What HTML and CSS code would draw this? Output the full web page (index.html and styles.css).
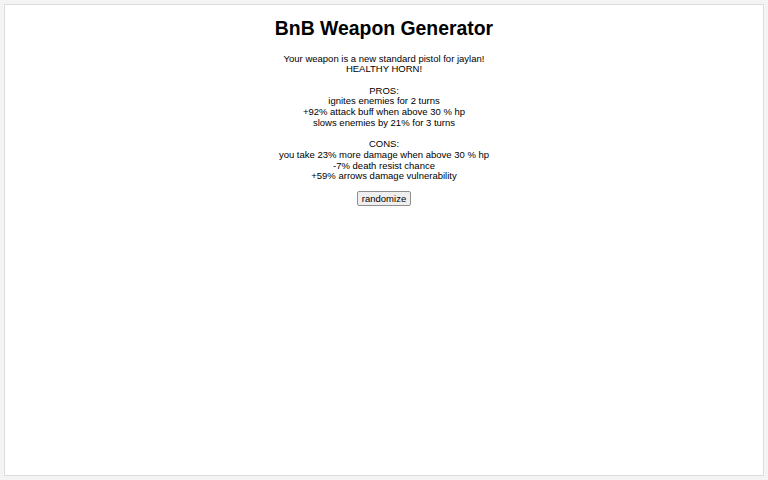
FILE: index.html
```html
<!DOCTYPE html>
<html lang="en">
<head>
    <meta charset="UTF-8">
    <meta name="viewport" content="width=device-width, initial-scale=1.0">
    <title>BnB Weapon Generator</title>
    <link rel="stylesheet" href="styles.css">
</head>
<body>
    <div class="page">
        <h1 class="title">BnB Weapon Generator</h1>

        <!-- generated weapon -->
        <div class="weapon" id="weapon">
            <p>Your weapon is a new standard pistol for jaylan!<br>HEALTHY HORN!</p>
            <p>PROS:<br>ignites enemies for 2 turns<br>+92% attack buff when above 30 % hp<br>slows enemies by 21% for 3 turns</p>
            <p>CONS:<br>you take 23% more damage when above 30 % hp<br>-7% death resist chance<br>+59% arrows damage vulnerability</p>
        </div>

        <button class="rand-btn" id="randBtn">randomize</button>
    </div>
</body>
</html>
```

FILE: styles.css
```css
body {
    margin: 0;
    padding: 4px;
    height: 100vh;
    box-sizing: border-box;
    background-color: #f4f4f4;
    font-family: "Liberation Sans", Arial, sans-serif;
    color: #000;
}

.page {
    height: 100%;
    box-sizing: border-box;
    background: #fff;
    border: 1px solid #dcdcdc;
    text-align: center;
    padding-top: 12px;
}

.title {
    margin: 0 0 14.5px;
    font-size: 19.4px;
    line-height: 22px;
    font-weight: bold;
}

.weapon {
    font-size: 9.5px;
    line-height: 10.7px;
}

.weapon p {
    margin: 0 0 10.7px;
}

.weapon p:last-child {
    margin-bottom: 6.5px;
}

.rand-btn {
    font-family: "Liberation Sans", Arial, sans-serif;
    font-size: 9.5px;
    padding: 1px 4px;
    background: #efefef;
    border: 1px solid #8f8f8f;
    border-radius: 2px;
    color: #000;
}
```
